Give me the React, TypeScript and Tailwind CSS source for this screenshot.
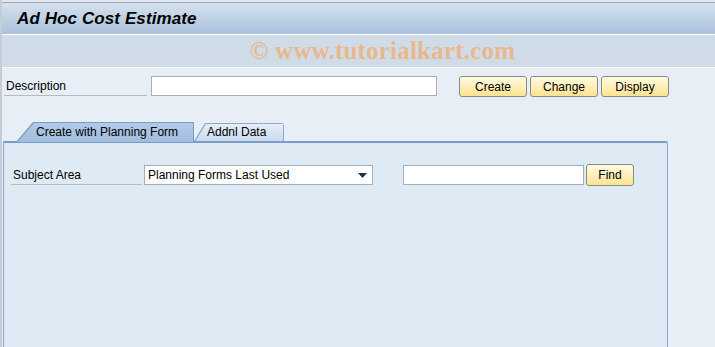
const font = { fontFamily: '"Liberation Sans", Arial, sans-serif' }

function SapButton({ label, width }: { label: string; width: string }) {
  return (
    <button
      className={`h-[21px] ${width} rounded-[3px] border border-[#8a8a8a] bg-gradient-to-b from-[#fffbe2] to-[#fde390] text-[12px] text-black leading-none`}
    >
      {label}
    </button>
  )
}

export default function App() {
  return (
    <div
      className="w-[715px] h-[347px] overflow-hidden bg-[#e8eef6] text-[12px] text-black border-l-2 border-[#c4ccd6] flex flex-col"
      style={font}
    >
      {/* title bar */}
      <div className="bg-[#e4e8ee] pt-[2px]">
        <div className="h-[32px] border-t border-[#97a6b8] bg-gradient-to-b from-[#d6e2ef] to-[#a9c1da] flex items-center pl-[15px]">
          <h1 className="text-[17px] font-bold italic text-black tracking-[0.1px]">Ad Hoc Cost Estimate</h1>
        </div>
      </div>

      {/* toolbar */}
      <div className="h-[34px] border-t border-white border-b border-[#a9b5c3] bg-[#cfdce8] flex items-center justify-center">
        <span
          className="text-[25px] font-bold text-[#e9b88a] ml-[48px] tracking-[0.2px]"
          style={{ fontFamily: '"Liberation Serif", "Times New Roman", serif' }}
        >
          © www.tutorialkart.com
        </span>
      </div>

      {/* description row */}
      <div className="flex items-start mt-[8px] pl-[2px]">
        <div className="w-[143px] h-[20px] border-b border-[#b3bdc8] flex items-center pl-[2px]">Description</div>
        <input className="ml-[4px] w-[286px] h-[20px] bg-white border border-[#a6adb6] outline-none" />
        <div className="flex gap-[3px] ml-[22px]">
          <SapButton label="Create" width="w-[68px]" />
          <SapButton label="Change" width="w-[68px]" />
          <SapButton label="Display" width="w-[68px]" />
        </div>
      </div>

      {/* tabs */}
      <div className="flex items-end mt-[25px] ml-[14px] h-[19px] relative z-10">
        <div
          className="h-[20px] w-[178px] bg-[#7b9bc4] -mb-[1px]"
          style={{ clipPath: 'polygon(0 100%, 17px 0, 100% 0, 100% 100%)' }}
        >
          <div
            className="h-full w-full bg-gradient-to-b from-[#b4cbe6] to-[#9fbcde] flex items-center pl-[20px] text-black"
            style={{ clipPath: 'polygon(1.5px 100%, 18px 1px, calc(100% - 1px) 1px, calc(100% - 1px) 100%)' }}
          >
            Create with Planning Form
          </div>
        </div>
        <div
          className="h-[18px] w-[90px] bg-[#8ea9cc] rounded-tr-[3px]"
          style={{ clipPath: 'polygon(0 100%, 11px 0, 100% 0, 100% 100%)' }}
        >
          <div
            className="h-full w-full bg-gradient-to-b from-[#e6eff8] to-[#c9dbee] flex items-center pl-[13px] rounded-tr-[3px]"
            style={{ clipPath: 'polygon(1.5px 100%, 12px 1px, calc(100% - 1px) 1px, calc(100% - 1px) 100%)' }}
          >
            Addnl Data
          </div>
        </div>
      </div>

      {/* tab panel */}
      <div className="ml-[1px] w-[665px] flex-1 bg-[#deeaf4] border-t-2 border-[#7b9cc9] border-l border-r border-l-[#8aa7cb] border-r-[#8aa7cb] rounded-tr-[2px]">
        <div className="flex items-start mt-[22px] pl-[7px]">
          <div className="w-[131px] h-[20px] border-b border-[#b3bdc8] flex items-center pl-[2px] pt-[1px]">Subject Area</div>
          <div className="ml-[2px] w-[229px] h-[20px] bg-white border border-[#a6adb6] flex items-center justify-between pl-[3px] pr-[5px]">
            <span>Planning Forms Last Used</span>
            <svg width="9" height="5" viewBox="0 0 9 5">
              <path d="M0 0h9L4.5 5z" fill="#1f2f4f" />
            </svg>
          </div>
          <input className="ml-[30px] w-[181px] h-[20px] bg-white border border-[#a6adb6] outline-none" />
          <div className="ml-[2px] -mt-[1px]">
            <SapButton label="Find" width="w-[48px] h-[22px]" />
          </div>
        </div>
      </div>
    </div>
  )
}
